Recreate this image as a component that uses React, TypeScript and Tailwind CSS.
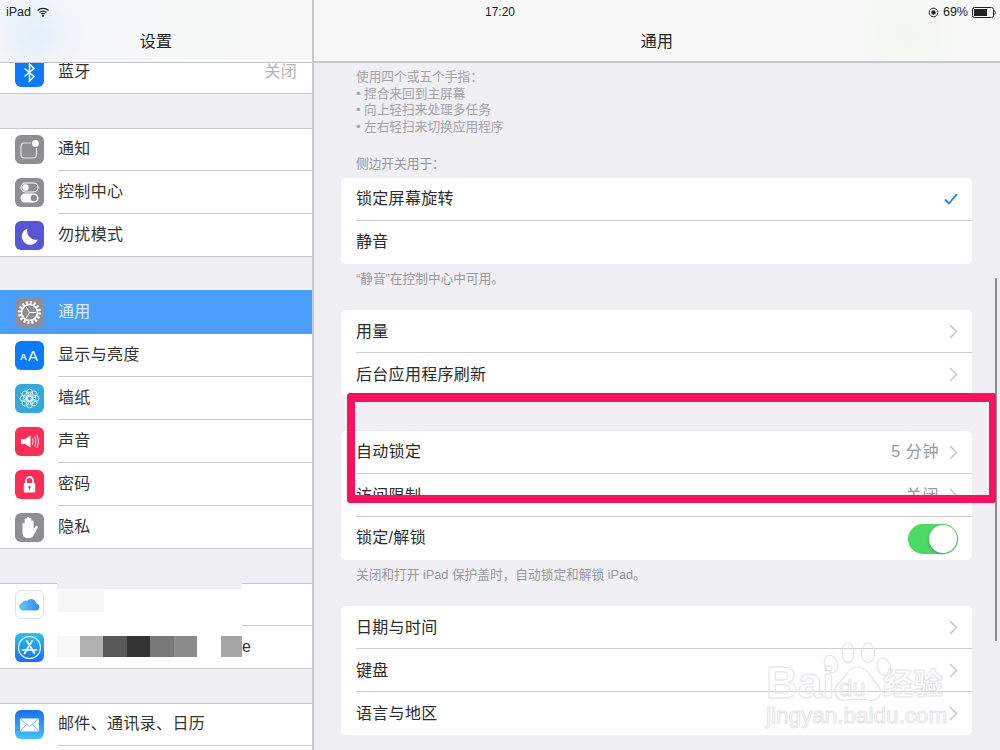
import React from "react";

const IconBox = ({ bg, children }: { bg: string; children: React.ReactNode }) => (
  <div className={`w-[29px] h-[29px] rounded-[6px] shrink-0 flex items-center justify-center overflow-hidden ${bg}`}>
    {children}
  </div>
);

const Svg = ({ children }: { children: React.ReactNode }) => (
  <svg width="29" height="29" viewBox="0 0 29 29">{children}</svg>
);

const Bluetooth = () => (
  <Svg>
    <path d="M9.5 10.5 L19 18.5 L14.5 23 V6 L19 10.5 L9.5 18.5" fill="none" stroke="#fff" strokeWidth="1.5" />
  </Svg>
);
const Notify = () => (
  <Svg>
    <rect x="6" y="8" width="15.5" height="15" rx="3.5" fill="none" stroke="#e4e4e6" strokeWidth="1.2" />
    <circle cx="20.5" cy="8.5" r="4.6" fill="#8e8e93" />
    <circle cx="20.5" cy="8.5" r="3.4" fill="#fff" />
  </Svg>
);
const Control = () => (
  <Svg>
    <rect x="6" y="5" width="17" height="9" rx="4.5" fill="none" stroke="#fff" strokeWidth="1.2" />
    <circle cx="10.5" cy="9.5" r="3.2" fill="#fff" />
    <rect x="5.5" y="15.5" width="18" height="9" rx="4.5" fill="#fff" />
    <circle cx="18.8" cy="20" r="3.2" fill="#8e8e93" />
  </Svg>
);
const Moon = () => (
  <Svg>
    <path d="M12.5 7.5 A8.4 8.4 0 1 0 23 18.6 A8.8 8.8 0 0 1 12.5 7.5 Z" fill="#fff" />
  </Svg>
);
const Gear = () => (
  <Svg>
    <circle cx="14.5" cy="14.5" r="10" fill="none" stroke="#fff" strokeWidth="3" strokeDasharray="2 1.93" />
    <circle cx="14.5" cy="14.5" r="8" fill="none" stroke="#fff" strokeWidth="1.6" />
    <path d="M14.5 14.5 L11 8.5 M14.5 14.5 H21.5 M14.5 14.5 L11 20.5" stroke="#fff" strokeWidth="1" />
  </Svg>
);
const Display = () => (
  <Svg>
    <text x="5" y="18.5" fontSize="9.5" fontWeight="bold" fill="#fff" fontFamily="Liberation Sans">A</text>
    <text x="13" y="20" fontSize="15" fill="#fff" fontFamily="Liberation Sans">A</text>
  </Svg>
);
const Flower = () => (
  <Svg>
    {[0, 45, 90, 135, 180, 225, 270, 315].map((a) => (
      <ellipse key={a} cx="14.5" cy="8.8" rx="3" ry="3.8" fill="none" stroke="#fff" strokeWidth="0.8" transform={`rotate(${a} 14.5 14.5)`} />
    ))}
    <circle cx="14.5" cy="14.5" r="3" fill="none" stroke="#fff" strokeWidth="0.8" />
    <circle cx="14.5" cy="14.5" r="6" fill="none" stroke="#fff" strokeWidth="0.6" />
  </Svg>
);
const Sound = () => (
  <Svg>
    <path d="M6 12 H10 L15.5 8.5 V20.5 L10 17 H6 Z" fill="#fff" />
    <path d="M17.5 11.5 Q19 14.5 17.5 17.5 M19.8 9.5 Q22.2 14.5 19.8 19.5 M22 8 Q25 14.5 22 21" fill="none" stroke="#fff" strokeWidth="1" />
  </Svg>
);
const Lock = () => (
  <Svg>
    <path d="M11 13 V10.5 A3.5 3.5 0 0 1 18 10.5 V13" fill="none" stroke="#fff" strokeWidth="1.8" />
    <rect x="8.8" y="13" width="11.4" height="9.5" rx="1" fill="#fff" />
    <circle cx="14.5" cy="17" r="1.2" fill="#ff2d55" />
    <rect x="14" y="17" width="1" height="3" fill="#ff2d55" />
  </Svg>
);
const Hand = () => (
  <Svg>
    <path
      d="M7.5 11 C7.5 9.5 9.6 9.5 9.6 11 V6.5 C9.6 5 11.8 5 11.8 6.5 V5 C11.8 3.5 14.1 3.5 14.1 5 V5.8 C14.1 4.5 16.4 4.5 16.4 5.8 V8.5 C16.4 7.2 18.6 7.2 18.6 8.5 V16 L20.5 13.5 C21.6 12 23.6 13 22.6 14.8 L18.5 22.5 C17.5 24.5 16 25 14 25 H12.5 C9.5 25 7.5 23 7.5 20 Z"
      fill="#fff"
    />
  </Svg>
);
const Cloud = () => (
  <svg width="29" height="29" viewBox="0 0 29 29">
    <defs>
      <linearGradient id="cloudG" x1="0" y1="0" x2="1" y2="0">
        <stop offset="0" stopColor="#62c6f8" />
        <stop offset="1" stopColor="#2f8cf2" />
      </linearGradient>
    </defs>
    <path d="M7.5 21 A4.3 4.3 0 0 1 6.5 12.6 A4.6 4.6 0 0 1 12 10.4 A6 6 0 0 1 22 13.4 A3.9 3.9 0 0 1 22 21 Z" fill="url(#cloudG)" />
  </svg>
);
const AppStore = () => (
  <Svg>
    <circle cx="14.5" cy="14.5" r="11" fill="none" stroke="#fff" strokeWidth="1.1" />
    <path d="M12 8 L19.5 20.5 M17 8 L9.5 20.5 M7.5 17 H21.5" fill="none" stroke="#fff" strokeWidth="1.7" strokeLinecap="round" />
  </Svg>
);
const Mail = () => (
  <Svg>
    <rect x="5" y="8.5" width="19" height="13" rx="1" fill="#fff" />
    <path d="M5.5 9 L14.5 16.5 L23.5 9 M5.5 21 L11.5 14.5 M23.5 21 L17.5 14.5" fill="none" stroke="#4aa0f5" strokeWidth="0.8" />
  </Svg>
);

const SideRow = ({
  icon,
  label,
  value,
  last,
  active,
  top,
}: {
  icon: React.ReactNode;
  label: React.ReactNode;
  value?: string;
  last?: boolean;
  active?: boolean;
  top?: boolean;
}) => (
  <div className={`relative h-[43px] flex items-center pl-[15px] ${active ? "bg-[#4b9ffc]" : "bg-white"}`}>
    {top && <div className="absolute top-0 left-0 right-0 h-px bg-[#c8c7cc]" />}
    {icon}
    <div className={`ml-[14px] -mt-[2px] text-[16px] tracking-[0.35px] flex items-center ${active ? "text-[#dcecff]" : "text-[#333]"}`}>{label}</div>
    {value && <div className="ml-auto mr-[15px] -mt-[2px] text-[16px] tracking-[0.3px] text-[#b4b4b8]">{value}</div>}
    {!active && <div className={`absolute bottom-0 right-0 h-px bg-[#c8c7cc] ${last ? "left-0" : "left-[58px]"}`} />}
  </div>
);

const Chevron = () => (
  <svg width="9" height="15" viewBox="0 0 9 15" className="ml-[10px] mr-[14px]">
    <path d="M1 1 L7.5 7.5 L1 14" fill="none" stroke="#c7c7cc" strokeWidth="1.5" />
  </svg>
);

const CardRow = ({
  label,
  value,
  right,
  chevron,
  last,
  textClass = "",
}: {
  label: React.ReactNode;
  value?: string;
  right?: React.ReactNode;
  chevron?: boolean;
  last?: boolean;
  textClass?: string;
}) => (
  <div className="relative h-[43px] flex items-center pl-[15px]">
    <div className={`text-[16px] tracking-[0.3px] text-[#2b2b2b] ${textClass}`}>{label}</div>
    <div className="ml-auto flex items-center">
      {value && <span className={`text-[16px] tracking-[0.6px] text-[#98989d] ${textClass}`}>{value}</span>}
      {chevron && <Chevron />}
      {right}
    </div>
    {!last && <div className="absolute bottom-0 left-[15px] right-0 h-px bg-[#d0d0d4]" />}
  </div>
);

const Card = ({ children, className = "" }: { children: React.ReactNode; className?: string }) => (
  <div className={`bg-white rounded-[5px] ${className}`}>{children}</div>
);

const Note = ({ children, className = "" }: { children: React.ReactNode; className?: string }) => (
  <div className={`text-[12.7px] leading-[16.5px] text-[#98989d] pl-[15px] ${className}`}>{children}</div>
);

export default function App() {
  return (
    <div className="relative w-[1000px] h-[750px] overflow-hidden flex bg-[#efeff4] font-['Liberation_Sans','Noto_Sans_CJK_SC',sans-serif]">
      {/* Sidebar */}
      <div className="w-[314px] h-full shrink-0 border-r-2 border-[#c8c7cc] flex flex-col bg-[#efeff4] overflow-hidden">
        <div className="relative z-10 h-[63px] shrink-0 border-b border-[#c4c4c8] bg-[radial-gradient(circle_at_35px_35px,#e2effc_0px,#f6f7f8_50px,#f8f8f8_100%)] flex items-end justify-center pb-[8px]">
          <span className="text-[16px] tracking-[0.3px] text-[#222]">设置</span>
        </div>
        <div className="-mt-[12px]">
          <SideRow icon={<IconBox bg="bg-[#0a7bff]"><Bluetooth /></IconBox>} label="蓝牙" value="关闭" last />
        </div>
        <div className="mt-[34px]">
          <SideRow top icon={<IconBox bg="bg-[#8e8e93]"><Notify /></IconBox>} label="通知" />
          <SideRow icon={<IconBox bg="bg-[#8e8e93]"><Control /></IconBox>} label="控制中心" />
          <SideRow icon={<IconBox bg="bg-[#5856d6]"><Moon /></IconBox>} label="勿扰模式" last />
        </div>
        <div className="mt-[33px]">
          <div className="h-px bg-[#4b9ffc]" />
          <SideRow active icon={<IconBox bg="bg-[#8e8e93]"><Gear /></IconBox>} label="通用" />
          <SideRow icon={<IconBox bg="bg-[#0a7bff]"><Display /></IconBox>} label="显示与亮度" />
          <SideRow icon={<IconBox bg="bg-[#34aadc]"><Flower /></IconBox>} label="墙纸" />
          <SideRow icon={<IconBox bg="bg-[#ff2d55]"><Sound /></IconBox>} label="声音" />
          <SideRow icon={<IconBox bg="bg-[#ff2d55]"><Lock /></IconBox>} label="密码" />
          <SideRow icon={<IconBox bg="bg-[#8e8e93]"><Hand /></IconBox>} label="隐私" last />
        </div>
        <div className="mt-[34px]">
          <div className="relative">
            <SideRow
              top
              icon={<IconBox bg="bg-white border border-[#e2e2e2]"><Cloud /></IconBox>}
              label={<div className="w-[46px] h-[22px] -mt-[6px] bg-[#f6f6f6]" />}
            />
            <div className="absolute left-[57px] top-0 w-[185px] h-[6px] bg-[#efeff4]" />
            <div className="absolute left-[57px] bottom-0 w-[185px] h-px bg-white" />
          </div>
          <SideRow
            last
            icon={<IconBox bg="bg-[linear-gradient(#2cc0f8,#1a6ff0)]"><AppStore /></IconBox>}
            label={
              <>
                <div className="flex h-[21px] -ml-[1px]">
                  <div className="w-[23px] bg-[#f8f8f8]" />
                  <div className="w-[23px] bg-[#b0b0b0]" />
                  <div className="w-[24px] bg-[#585858]" />
                  <div className="w-[23px] bg-[#333333]" />
                  <div className="w-[24px] bg-[#787878]" />
                  <div className="w-[23px] bg-[#8c8c8c]" />
                  <div className="w-[24px] bg-white" />
                  <div className="w-[21px] bg-[#a5a5a5]" />
                </div>
                <span>e</span>
              </>
            }
          />
        </div>
        <div className="mt-[34px]">
          <SideRow top icon={<IconBox bg="bg-[linear-gradient(#1a6ff0,#3fc4fb)]"><Mail /></IconBox>} label="邮件、通讯录、日历" />
        </div>
        <div className="flex-1 bg-white" />
      </div>

      {/* Main */}
      <div className="flex-1 min-w-0 h-full flex flex-col">
        <div className="h-[63px] shrink-0 border-b-2 border-[#c8c8cc] bg-[radial-gradient(circle_at_595px_35px,#f0f8f0_0px,#f7f8f7_50px,#f8f8f8_100%)] flex items-end justify-center pb-[7px]">
          <span className="text-[16px] tracking-[0.3px] text-[#222]">通用</span>
        </div>
        <div className="pl-[27px] pr-[28px] pt-[6px]">
          <Note className="text-[#a4a4a8]">
            <div>使用四个或五个手指：</div>
            <div>• 捏合来回到主屏幕</div>
            <div>• 向上轻扫来处理多任务</div>
            <div>• 左右轻扫来切换应用程序</div>
          </Note>
          <Note className="mt-[21px] mb-[5px]">侧边开关用于：</Note>
          <Card>
            <CardRow
              label="锁定屏幕旋转"
              right={
                <svg width="14" height="12" viewBox="0 0 14 12" className="mr-[14px]">
                  <path d="M1 6.5 L5 10.5 L13 1" fill="none" stroke="#1a7ff0" strokeWidth="1.8" />
                </svg>
              }
            />
            <CardRow label="静音" last />
          </Card>
          <Note className="mt-[7px]">“静音”在控制中心中可用。</Note>
          <Card className="mt-[23px]">
            <CardRow label="用量" chevron />
            <CardRow label="后台应用程序刷新" chevron last />
          </Card>
          <Card className="mt-[35px]">
            <CardRow label="自动锁定" value="5 分钟" chevron textClass="-mt-[2px]" />
            <div className="relative">
              <CardRow label="访问限制" value="关闭" chevron />
              <div className="absolute left-0 right-0 top-[29px] h-[12px] bg-white" />
            </div>
            <CardRow
              label="锁定/解锁"
              last
              textClass="-mt-[2px]"
              right={
                <div className="w-[50px] h-[30px] mr-[14px] rounded-full bg-[#4cd964] flex items-center justify-end pr-[1px]">
                  <div className="w-[28px] h-[28px] rounded-full bg-white shadow-[0_1px_3px_rgba(0,0,0,0.3)]" />
                </div>
              }
            />
          </Card>
          <Note className="mt-[7px]">关闭和打开 iPad 保护盖时，自动锁定和解锁 iPad。</Note>
          <Card className="mt-[22px]">
            <CardRow label="日期与时间" chevron textClass="mt-[2px]" />
            <CardRow label="键盘" chevron textClass="mt-[2px]" />
            <CardRow label="语言与地区" chevron last textClass="mt-[2px]" />
          </Card>
        </div>
      </div>

      {/* Status bar */}
      <div className="absolute z-20 top-0 left-0 right-0 h-[20px] text-[12.5px] text-[#222]">
        <div className="absolute left-[6px] top-[3px] flex items-center gap-[6px]">
          <span>iPad</span>
          <svg width="12" height="10" viewBox="0 0 12 10">
            <path d="M0.5 3.5 A8 8 0 0 1 11.5 3.5 M2.5 5.5 A5 5 0 0 1 9.5 5.5 M4.2 7.2 A2.5 2.5 0 0 1 7.8 7.2" fill="none" stroke="#222" strokeWidth="1.2" />
            <circle cx="6" cy="8.8" r="1" fill="#222" />
          </svg>
        </div>
        <div className="absolute left-0 right-0 top-[3px] text-center text-[12px]">17:20</div>
        <div className="absolute right-[4px] top-[3px] flex items-center gap-[4px]">
          <svg width="11" height="11" viewBox="0 0 11 11">
            <circle cx="5.5" cy="5.5" r="4.3" fill="none" stroke="#222" strokeWidth="1" />
            <circle cx="5.5" cy="5.5" r="2.2" fill="#222" />
          </svg>
          <span>69%</span>
          <svg width="24" height="11" viewBox="0 0 24 11">
            <rect x="0.5" y="0.5" width="21" height="10" rx="2" fill="none" stroke="#222" />
            <rect x="2" y="2" width="13" height="7" fill="#222" />
            <path d="M22.5 3.5 Q24 5.5 22.5 7.5" fill="none" stroke="#222" />
          </svg>
        </div>
      </div>

      {/* Scrollbar */}
      <div className="absolute left-[995px] top-[278px] w-[2px] h-[363px] rounded-full bg-[#8c8c90]" />

      {/* Red annotation */}
      <div className="absolute left-[347px] top-[393px] w-[649px] h-[110px] border-t-[9px] border-b-[8px] border-l-[8px] border-r-[7px] border-[#fb1060] rounded-[3px]" />

      {/* Watermark */}
      <div className="absolute left-[766px] top-[640px] w-[184px] h-[90px] text-transparent [-webkit-text-stroke:1px_#e4e4e7]">
        <div className="absolute left-0 top-[19px] text-[44px] leading-[48px] font-bold">Bai</div>
        <svg width="76" height="64" viewBox="0 0 76 64" className="absolute left-[52px] top-0">
          <g fill="none" stroke="#e4e4e7" strokeWidth="1.2">
            <ellipse cx="13" cy="24" rx="6.5" ry="9" transform="rotate(-20 13 24)" />
            <ellipse cx="30" cy="13" rx="6" ry="10" />
            <ellipse cx="50" cy="13" rx="6.5" ry="10" />
            <ellipse cx="66" cy="27" rx="6.5" ry="9" transform="rotate(-20 66 27)" />
            <path d="M39 27 C30 27 27 38 20 44 C13 51 18 62 29 60 C36 59 44 59 50 60 C60 62 66 54 60 45 C53 38 49 27 39 27 Z" />
          </g>
        </svg>
        <div className="absolute left-[73px] top-[34px] text-[24px] leading-[28px]">du</div>
        <div className="absolute left-[117px] top-[27px] text-[30px] leading-[34px] font-bold">经验</div>
        <div className="absolute left-0 top-[63px] text-[22.5px] leading-[26px] whitespace-nowrap">jingyan.baidu.com</div>
      </div>
    </div>
  );
}
